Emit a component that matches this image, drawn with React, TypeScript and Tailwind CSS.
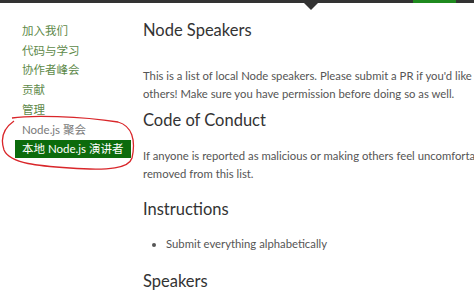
import React from "react";

const navItems = ["加入我们", "代码与学习", "协作者峰会", "贡献", "管理"];

export default function App() {
  return (
    <div className="relative w-[474px] h-[297px] overflow-hidden bg-white" style={{ fontFamily: 'Lato, "Noto Sans CJK SC", sans-serif' }}>
      <div className="relative h-[3px] bg-[#333] flex">
        <div className="ml-[413px] w-[43px] h-[3px] bg-[#1f8a1f]" />
        <div className="absolute left-[303px] top-[2px] w-0 h-0 border-l-[8px] border-r-[8px] border-t-[8px] border-l-transparent border-r-transparent border-t-[#333]" />
      </div>
      <div className="flex">
        <nav className="w-[143px] shrink-0 pt-[18px] pl-[15px] flex flex-col text-[11.5px] leading-[19.7px] whitespace-nowrap">
          {navItems.map((t) => (
            <span key={t} className="px-[7px] text-[#5e8a4a]">{t}</span>
          ))}
          <span className="px-[7px] text-[#7a7a7a]">Node.js 聚会</span>
          <span className="px-[7px] w-[116px] h-[18px] leading-[18px] mt-[1px] bg-[#0c6b0c] text-white">本地 Node.js 演讲者</span>
        </nav>
        <main className="flex-1 pt-[16px] text-[#555] whitespace-nowrap">
          <h1 className="text-[16.5px] leading-[22px] text-[#333]">Node Speakers</h1>
          <p className="mt-[26px] text-[11.3px] leading-[18px]">This is a list of local Node speakers. Please submit a PR if you'd like to add<br />others! Make sure you have permission before doing so as well.</p>
          <h2 className="mt-[6px] text-[16.5px] leading-[22px] text-[#333]">Code of Conduct</h2>
          <p className="mt-[16px] text-[11.3px] leading-[18px]">If anyone is reported as malicious or making others feel uncomfortable, they will be<br />removed from this list.</p>
          <h2 className="mt-[15px] text-[16.5px] leading-[22px] text-[#333]">Instructions</h2>
          <ul className="mt-[15px] list-disc pl-[23px] text-[11.3px] leading-[18px]">
            <li>Submit everything alphabetically</li>
          </ul>
          <h2 className="mt-[17px] text-[16.5px] leading-[22px] text-[#333]">Speakers</h2>
        </main>
      </div>
      <svg className="absolute left-0 top-0 pointer-events-none" width="474" height="297" viewBox="0 0 474 297">
        <path d="M12 118 C 30 115, 80 116, 118 122 C 132 126, 136 140, 132 158 C 129 168, 110 171, 70 168 C 40 166, 10 164, 4 150 C 0 138, 4 128, 14 121" fill="none" stroke="#d9262a" strokeWidth="1.3" />
      </svg>
    </div>
  );
}
